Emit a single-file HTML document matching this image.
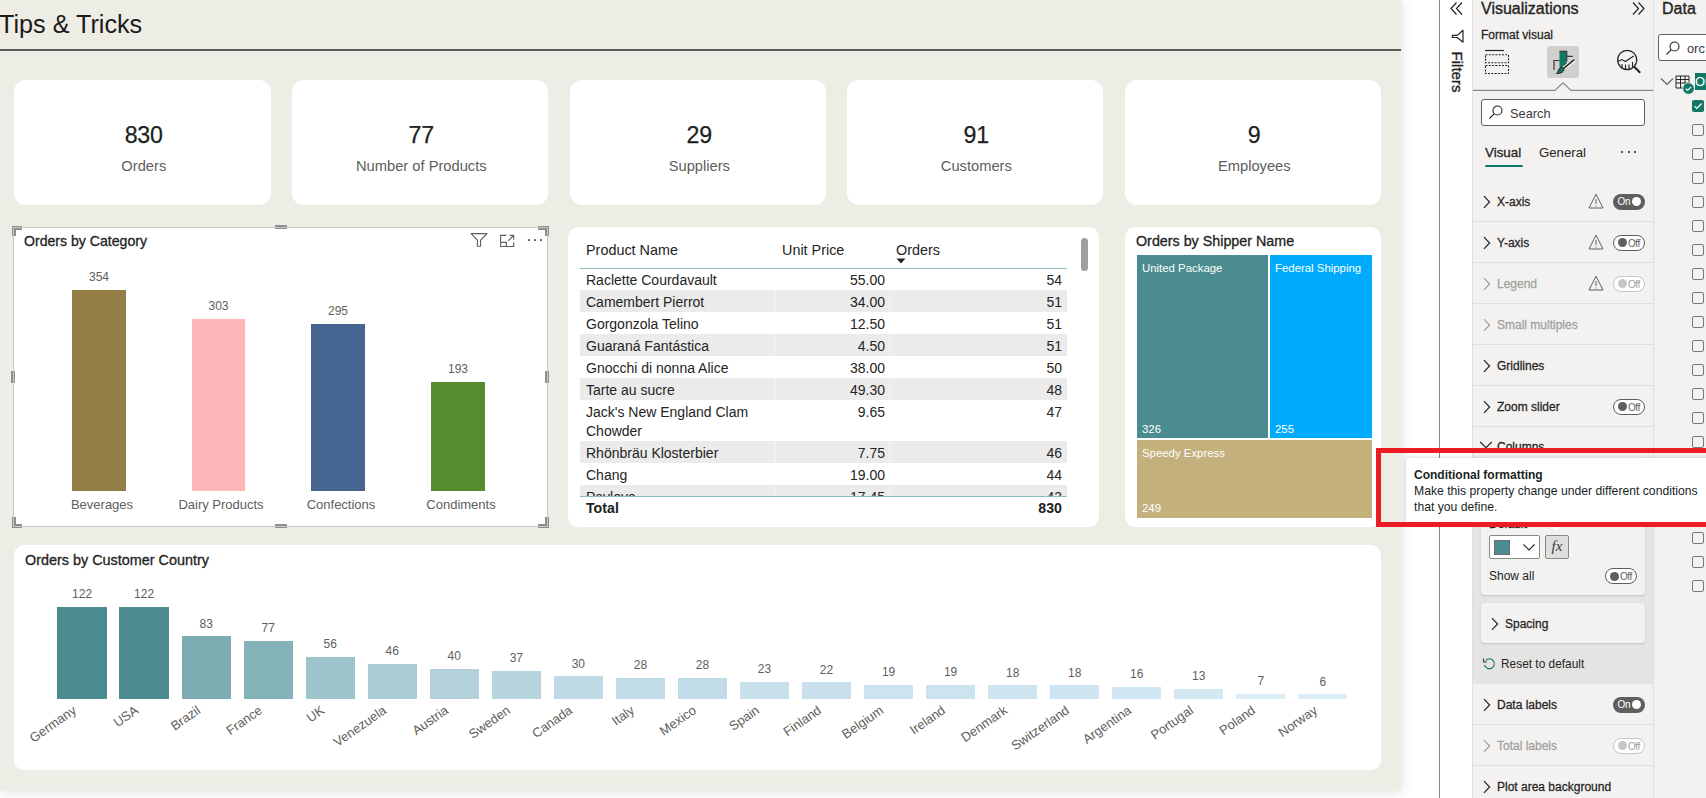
<!DOCTYPE html><html><head><meta charset="utf-8"><style>
html,body{margin:0;padding:0;width:1706px;height:798px;overflow:hidden;background:#F6F6F6}
#root{position:relative;width:1706px;height:798px;overflow:hidden;font-family:"Liberation Sans",sans-serif}
.t{position:absolute;white-space:nowrap}
</style></head><body><div id="root">
<div style="position:absolute;left:0px;top:0px;width:1706px;height:798px;background:#FFFFFF"></div>
<div style="position:absolute;left:0px;top:0px;width:1401px;height:791px;background:#EEEDE5;box-shadow:0 0 12px rgba(0,0,0,0.15)"></div>
<div class="t" style="left:-1px;top:9.25px;font-size:25.2px;line-height:31.5px;color:#1B1A19;font-weight:normal;">Tips &amp; Tricks</div>
<div style="position:absolute;left:0px;top:49px;width:1401px;height:2px;background:#5A5A56"></div>
<div style="position:absolute;left:14px;top:80px;width:257px;height:125px;background:#fff;border-radius:12px"></div>
<div class="t" style="left:-156.2px;width:600px;text-align:center;top:121.1px;font-size:23.2px;line-height:29.0px;color:#201F1E;font-weight:normal;letter-spacing:-0.3px;text-indent:-0.3px;-webkit-text-stroke:0.25px #201F1E">830</div>
<div class="t" style="left:-156.2px;width:600px;text-align:center;top:156.81px;font-size:14.7px;line-height:18.38px;color:#605E5C;font-weight:normal;">Orders</div>
<div style="position:absolute;left:292px;top:80px;width:256px;height:125px;background:#fff;border-radius:12px"></div>
<div class="t" style="left:121.30000000000001px;width:600px;text-align:center;top:121.1px;font-size:23.2px;line-height:29.0px;color:#201F1E;font-weight:normal;letter-spacing:-0.3px;text-indent:-0.3px;-webkit-text-stroke:0.25px #201F1E">77</div>
<div class="t" style="left:121.30000000000001px;width:600px;text-align:center;top:156.81px;font-size:14.7px;line-height:18.38px;color:#605E5C;font-weight:normal;">Number of Products</div>
<div style="position:absolute;left:570px;top:80px;width:256px;height:125px;background:#fff;border-radius:12px"></div>
<div class="t" style="left:399.29999999999995px;width:600px;text-align:center;top:121.1px;font-size:23.2px;line-height:29.0px;color:#201F1E;font-weight:normal;letter-spacing:-0.3px;text-indent:-0.3px;-webkit-text-stroke:0.25px #201F1E">29</div>
<div class="t" style="left:399.29999999999995px;width:600px;text-align:center;top:156.81px;font-size:14.7px;line-height:18.38px;color:#605E5C;font-weight:normal;">Suppliers</div>
<div style="position:absolute;left:847px;top:80px;width:256px;height:125px;background:#fff;border-radius:12px"></div>
<div class="t" style="left:676.3px;width:600px;text-align:center;top:121.1px;font-size:23.2px;line-height:29.0px;color:#201F1E;font-weight:normal;letter-spacing:-0.3px;text-indent:-0.3px;-webkit-text-stroke:0.25px #201F1E">91</div>
<div class="t" style="left:676.3px;width:600px;text-align:center;top:156.81px;font-size:14.7px;line-height:18.38px;color:#605E5C;font-weight:normal;">Customers</div>
<div style="position:absolute;left:1125px;top:80px;width:256px;height:125px;background:#fff;border-radius:12px"></div>
<div class="t" style="left:954.3px;width:600px;text-align:center;top:121.1px;font-size:23.2px;line-height:29.0px;color:#201F1E;font-weight:normal;letter-spacing:-0.3px;text-indent:-0.3px;-webkit-text-stroke:0.25px #201F1E">9</div>
<div class="t" style="left:954.3px;width:600px;text-align:center;top:156.81px;font-size:14.7px;line-height:18.38px;color:#605E5C;font-weight:normal;">Employees</div>
<div style="position:absolute;left:13px;top:227px;width:535px;height:300px;background:#fff"></div>
<div class="t" style="left:24px;top:232.69px;font-size:14.1px;line-height:17.62px;color:#252423;font-weight:normal;-webkit-text-stroke:0.31px #252423;">Orders by Category</div>
<div style="position:absolute;left:72px;top:290px;width:54px;height:201px;background:#937F45"></div>
<div class="t" style="left:-201.0px;width:600px;text-align:center;top:270.3px;font-size:12px;line-height:15.0px;color:#605E5C;font-weight:normal;">354</div>
<div class="t" style="left:-198px;width:600px;text-align:center;top:497.27px;font-size:13px;line-height:16.25px;color:#605E5C;font-weight:normal;">Beverages</div>
<div style="position:absolute;left:192px;top:319px;width:53px;height:172px;background:#FFB6B9"></div>
<div class="t" style="left:-81.5px;width:600px;text-align:center;top:299.3px;font-size:12px;line-height:15.0px;color:#605E5C;font-weight:normal;">303</div>
<div class="t" style="left:-79px;width:600px;text-align:center;top:497.27px;font-size:13px;line-height:16.25px;color:#605E5C;font-weight:normal;">Dairy Products</div>
<div style="position:absolute;left:311px;top:324px;width:54px;height:167px;background:#476591"></div>
<div class="t" style="left:38.0px;width:600px;text-align:center;top:304.3px;font-size:12px;line-height:15.0px;color:#605E5C;font-weight:normal;">295</div>
<div class="t" style="left:41px;width:600px;text-align:center;top:497.27px;font-size:13px;line-height:16.25px;color:#605E5C;font-weight:normal;">Confections</div>
<div style="position:absolute;left:431px;top:382px;width:54px;height:109px;background:#568C2F"></div>
<div class="t" style="left:158.0px;width:600px;text-align:center;top:362.3px;font-size:12px;line-height:15.0px;color:#605E5C;font-weight:normal;">193</div>
<div class="t" style="left:161px;width:600px;text-align:center;top:497.27px;font-size:13px;line-height:16.25px;color:#605E5C;font-weight:normal;">Condiments</div>
<div style="position:absolute;left:12px;top:226px;width:10px;height:4px;background:#8F8E8C"></div>
<div style="position:absolute;left:12px;top:226px;width:4px;height:10px;background:#8F8E8C"></div>
<div style="position:absolute;left:538px;top:226px;width:11px;height:4px;background:#8F8E8C"></div>
<div style="position:absolute;left:545px;top:226px;width:4px;height:10px;background:#8F8E8C"></div>
<div style="position:absolute;left:12px;top:524px;width:10px;height:4px;background:#8F8E8C"></div>
<div style="position:absolute;left:12px;top:517px;width:4px;height:11px;background:#8F8E8C"></div>
<div style="position:absolute;left:538px;top:524px;width:11px;height:4px;background:#8F8E8C"></div>
<div style="position:absolute;left:545px;top:517px;width:4px;height:11px;background:#8F8E8C"></div>
<div style="position:absolute;left:275px;top:225px;width:12px;height:4px;background:#8F8E8C"></div>
<div style="position:absolute;left:275px;top:524px;width:12px;height:4px;background:#8F8E8C"></div>
<div style="position:absolute;left:11px;top:371px;width:4px;height:12px;background:#8F8E8C"></div>
<div style="position:absolute;left:545px;top:371px;width:4px;height:12px;background:#8F8E8C"></div>
<div style="position:absolute;left:13px;top:227px;width:535px;height:300px;box-sizing:border-box;border:1px solid #C8C6C4"></div>
<svg style="position:absolute;left:469px;top:232px" width="20" height="17" viewBox="0 0 20 17"><path d="M2.1 1.6H17.9L11.6 8.2V14.3H8.4V8.2Z" fill="none" stroke="#605E5C" stroke-width="1.1" stroke-linejoin="round"/></svg>
<svg style="position:absolute;left:498px;top:232px" width="18" height="17" viewBox="0 0 18 17"><path d="M8.4 3.4H2.6V14.5H15.7V10.4M2.6 10.4H8.4V14.5M11.6 3.4H15.7V7.8M10.3 8.8L15.7 3.4" fill="none" stroke="#605E5C" stroke-width="1.1"/></svg>
<div style="position:absolute;left:528px;top:239px;width:2px;height:2px;background:#605E5C;border-radius:0.5px"></div>
<div style="position:absolute;left:534px;top:239px;width:2px;height:2px;background:#605E5C;border-radius:0.5px"></div>
<div style="position:absolute;left:540px;top:239px;width:2px;height:2px;background:#605E5C;border-radius:0.5px"></div>
<div style="position:absolute;left:568px;top:227px;width:531px;height:300px;background:#fff;border-radius:10px"></div>
<div class="t" style="left:586px;top:241.0px;font-size:14.4px;line-height:18.0px;color:#252423;font-weight:normal;">Product Name</div>
<div class="t" style="left:782px;top:241.0px;font-size:14.4px;line-height:18.0px;color:#252423;font-weight:normal;">Unit Price</div>
<div class="t" style="left:896px;top:241.0px;font-size:14.4px;line-height:18.0px;color:#252423;font-weight:normal;">Orders</div>
<svg style="position:absolute;left:896px;top:258px" width="10" height="6" viewBox="0 0 10 6"><path d="M0.5 0.5h9l-4.5 5z" fill="#252423"/></svg>
<div style="position:absolute;left:580px;top:267.5px;width:487px;height:1.5px;background:#8CBDC0"></div>
<div style="position:absolute;left:568px;top:269px;width:531px;height:227.5px;overflow:hidden">
<div style="position:absolute;left:12px;top:-1px;width:487px;height:22px;background:#fff"></div>
<div class="t" style="left:18px;top:2px;font-size:14px;line-height:19px;color:#252423">Raclette Courdavault</div>
<div class="t" style="left:217px;width:100px;text-align:right;top:2px;font-size:14px;line-height:19px;color:#252423">55.00</div>
<div class="t" style="left:394px;width:100px;text-align:right;top:2px;font-size:14px;line-height:19px;color:#252423">54</div>
<div style="position:absolute;left:12px;top:21px;width:487px;height:22px;background:#EBEBEB"></div>
<div style="position:absolute;left:207px;top:21px;width:1px;height:22px;background:#F2F2F2"></div>
<div style="position:absolute;left:321px;top:21px;width:1px;height:22px;background:#F2F2F2"></div>
<div class="t" style="left:18px;top:24px;font-size:14px;line-height:19px;color:#252423">Camembert Pierrot</div>
<div class="t" style="left:217px;width:100px;text-align:right;top:24px;font-size:14px;line-height:19px;color:#252423">34.00</div>
<div class="t" style="left:394px;width:100px;text-align:right;top:24px;font-size:14px;line-height:19px;color:#252423">51</div>
<div style="position:absolute;left:12px;top:43px;width:487px;height:22px;background:#fff"></div>
<div class="t" style="left:18px;top:46px;font-size:14px;line-height:19px;color:#252423">Gorgonzola Telino</div>
<div class="t" style="left:217px;width:100px;text-align:right;top:46px;font-size:14px;line-height:19px;color:#252423">12.50</div>
<div class="t" style="left:394px;width:100px;text-align:right;top:46px;font-size:14px;line-height:19px;color:#252423">51</div>
<div style="position:absolute;left:12px;top:65px;width:487px;height:22px;background:#EBEBEB"></div>
<div style="position:absolute;left:207px;top:65px;width:1px;height:22px;background:#F2F2F2"></div>
<div style="position:absolute;left:321px;top:65px;width:1px;height:22px;background:#F2F2F2"></div>
<div class="t" style="left:18px;top:68px;font-size:14px;line-height:19px;color:#252423">Guaran&aacute; Fant&aacute;stica</div>
<div class="t" style="left:217px;width:100px;text-align:right;top:68px;font-size:14px;line-height:19px;color:#252423">4.50</div>
<div class="t" style="left:394px;width:100px;text-align:right;top:68px;font-size:14px;line-height:19px;color:#252423">51</div>
<div style="position:absolute;left:12px;top:87px;width:487px;height:22px;background:#fff"></div>
<div class="t" style="left:18px;top:90px;font-size:14px;line-height:19px;color:#252423">Gnocchi di nonna Alice</div>
<div class="t" style="left:217px;width:100px;text-align:right;top:90px;font-size:14px;line-height:19px;color:#252423">38.00</div>
<div class="t" style="left:394px;width:100px;text-align:right;top:90px;font-size:14px;line-height:19px;color:#252423">50</div>
<div style="position:absolute;left:12px;top:109px;width:487px;height:22px;background:#EBEBEB"></div>
<div style="position:absolute;left:207px;top:109px;width:1px;height:22px;background:#F2F2F2"></div>
<div style="position:absolute;left:321px;top:109px;width:1px;height:22px;background:#F2F2F2"></div>
<div class="t" style="left:18px;top:112px;font-size:14px;line-height:19px;color:#252423">Tarte au sucre</div>
<div class="t" style="left:217px;width:100px;text-align:right;top:112px;font-size:14px;line-height:19px;color:#252423">49.30</div>
<div class="t" style="left:394px;width:100px;text-align:right;top:112px;font-size:14px;line-height:19px;color:#252423">48</div>
<div style="position:absolute;left:12px;top:131px;width:487px;height:40.5px;background:#fff"></div>
<div class="t" style="left:18px;top:134px;font-size:14px;line-height:19px;color:#252423">Jack's New England Clam<br>Chowder</div>
<div class="t" style="left:217px;width:100px;text-align:right;top:134px;font-size:14px;line-height:19px;color:#252423">9.65</div>
<div class="t" style="left:394px;width:100px;text-align:right;top:134px;font-size:14px;line-height:19px;color:#252423">47</div>
<div style="position:absolute;left:12px;top:171.5px;width:487px;height:22.5px;background:#EBEBEB"></div>
<div style="position:absolute;left:207px;top:171.5px;width:1px;height:22.5px;background:#F2F2F2"></div>
<div style="position:absolute;left:321px;top:171.5px;width:1px;height:22.5px;background:#F2F2F2"></div>
<div class="t" style="left:18px;top:174.5px;font-size:14px;line-height:19px;color:#252423">Rh&ouml;nbr&auml;u Klosterbier</div>
<div class="t" style="left:217px;width:100px;text-align:right;top:174.5px;font-size:14px;line-height:19px;color:#252423">7.75</div>
<div class="t" style="left:394px;width:100px;text-align:right;top:174.5px;font-size:14px;line-height:19px;color:#252423">46</div>
<div style="position:absolute;left:12px;top:194px;width:487px;height:22px;background:#fff"></div>
<div class="t" style="left:18px;top:197px;font-size:14px;line-height:19px;color:#252423">Chang</div>
<div class="t" style="left:217px;width:100px;text-align:right;top:197px;font-size:14px;line-height:19px;color:#252423">19.00</div>
<div class="t" style="left:394px;width:100px;text-align:right;top:197px;font-size:14px;line-height:19px;color:#252423">44</div>
<div style="position:absolute;left:12px;top:216px;width:487px;height:22px;background:#EBEBEB"></div>
<div style="position:absolute;left:207px;top:216px;width:1px;height:22px;background:#F2F2F2"></div>
<div style="position:absolute;left:321px;top:216px;width:1px;height:22px;background:#F2F2F2"></div>
<div class="t" style="left:18px;top:219px;font-size:14px;line-height:19px;color:#252423">Pavlova</div>
<div class="t" style="left:217px;width:100px;text-align:right;top:219px;font-size:14px;line-height:19px;color:#252423">17.45</div>
<div class="t" style="left:394px;width:100px;text-align:right;top:219px;font-size:14px;line-height:19px;color:#252423">43</div>
</div>
<div style="position:absolute;left:580px;top:496px;width:487px;height:1.2px;background:#8CBDC0"></div>
<div class="t" style="left:586px;top:499.62px;font-size:14.2px;line-height:17.75px;color:#201F1E;font-weight:bold;">Total</div>
<div class="t" style="left:462px;width:600px;text-align:right;top:499.62px;font-size:14.2px;line-height:17.75px;color:#201F1E;font-weight:bold;">830</div>
<div style="position:absolute;left:1081px;top:238px;width:7px;height:33px;background:#A19F9D;border-radius:4px"></div>
<div style="position:absolute;left:1125px;top:227px;width:256px;height:300px;background:#fff;border-radius:10px"></div>
<div class="t" style="left:1136px;top:232.56px;font-size:14.3px;line-height:17.88px;color:#252423;font-weight:normal;-webkit-text-stroke:0.31px #252423;">Orders by Shipper Name</div>
<div style="position:absolute;left:1137px;top:255px;width:131px;height:183px;background:#4A8C8F"></div>
<div style="position:absolute;left:1269.7px;top:255px;width:102.3px;height:183px;background:#01ABFB"></div>
<div style="position:absolute;left:1137px;top:440px;width:235px;height:78px;background:#C4B07C"></div>
<div class="t" style="left:1142px;top:260.88px;font-size:11.4px;line-height:14.25px;color:#FFFFFF;font-weight:normal;">United Package</div>
<div class="t" style="left:1142px;top:422.38px;font-size:11.4px;line-height:14.25px;color:#FFFFFF;font-weight:normal;">326</div>
<div class="t" style="left:1275px;top:260.88px;font-size:11.4px;line-height:14.25px;color:#FFFFFF;font-weight:normal;">Federal Shipping</div>
<div class="t" style="left:1275px;top:422.38px;font-size:11.4px;line-height:14.25px;color:#FFFFFF;font-weight:normal;">255</div>
<div class="t" style="left:1142px;top:445.88px;font-size:11.4px;line-height:14.25px;color:#FFFFFF;font-weight:normal;">Speedy Express</div>
<div class="t" style="left:1142px;top:501.38px;font-size:11.4px;line-height:14.25px;color:#FFFFFF;font-weight:normal;">249</div>
<div style="position:absolute;left:14px;top:545px;width:1367px;height:225px;background:#fff;border-radius:10px"></div>
<div class="t" style="left:25px;top:550.5px;font-size:14.4px;line-height:18.0px;color:#252423;font-weight:normal;-webkit-text-stroke:0.32px #252423;">Orders by Customer Country</div>
<div style="position:absolute;left:57.4px;top:606.9px;width:49.3px;height:91.9px;background:#4A8C8F"></div>
<div class="t" style="left:-217.95px;width:600px;text-align:center;top:587.2px;font-size:12px;line-height:15.0px;color:#605E5C;font-weight:normal;">122</div>
<div class="t" style="left:-224.9px;width:300px;text-align:right;top:700.0px;font-size:13px;line-height:18px;color:#605E5C;transform-origin:100% 50%;transform:rotate(-35deg)">Germany</div>
<div style="position:absolute;left:119.4px;top:606.9px;width:49.3px;height:91.9px;background:#4A8C8F"></div>
<div class="t" style="left:-155.91px;width:600px;text-align:center;top:587.2px;font-size:12px;line-height:15.0px;color:#605E5C;font-weight:normal;">122</div>
<div class="t" style="left:-162.9px;width:300px;text-align:right;top:700.0px;font-size:13px;line-height:18px;color:#605E5C;transform-origin:100% 50%;transform:rotate(-35deg)">USA</div>
<div style="position:absolute;left:181.5px;top:636.3px;width:49.3px;height:62.5px;background:#7BADB3"></div>
<div class="t" style="left:-93.87px;width:600px;text-align:center;top:616.58px;font-size:12px;line-height:15.0px;color:#605E5C;font-weight:normal;">83</div>
<div class="t" style="left:-100.9px;width:300px;text-align:right;top:700.0px;font-size:13px;line-height:18px;color:#605E5C;transform-origin:100% 50%;transform:rotate(-35deg)">Brazil</div>
<div style="position:absolute;left:243.5px;top:640.8px;width:49.3px;height:58.0px;background:#83B2B9"></div>
<div class="t" style="left:-31.829999999999984px;width:600px;text-align:center;top:621.1px;font-size:12px;line-height:15.0px;color:#605E5C;font-weight:normal;">77</div>
<div class="t" style="left:-38.8px;width:300px;text-align:right;top:700.0px;font-size:13px;line-height:18px;color:#605E5C;transform-origin:100% 50%;transform:rotate(-35deg)">France</div>
<div style="position:absolute;left:305.6px;top:656.6px;width:49.3px;height:42.2px;background:#9EC4CC"></div>
<div class="t" style="left:30.20999999999998px;width:600px;text-align:center;top:636.92px;font-size:12px;line-height:15.0px;color:#605E5C;font-weight:normal;">56</div>
<div class="t" style="left:23.2px;width:300px;text-align:right;top:700.0px;font-size:13px;line-height:18px;color:#605E5C;transform-origin:100% 50%;transform:rotate(-35deg)">UK</div>
<div style="position:absolute;left:367.6px;top:664.1px;width:49.3px;height:34.7px;background:#AACCD6"></div>
<div class="t" style="left:92.24999999999994px;width:600px;text-align:center;top:644.45px;font-size:12px;line-height:15.0px;color:#605E5C;font-weight:normal;">46</div>
<div class="t" style="left:85.2px;width:300px;text-align:right;top:700.0px;font-size:13px;line-height:18px;color:#605E5C;transform-origin:100% 50%;transform:rotate(-35deg)">Venezuela</div>
<div style="position:absolute;left:429.6px;top:668.7px;width:49.3px;height:30.1px;background:#B2D1DB"></div>
<div class="t" style="left:154.28999999999996px;width:600px;text-align:center;top:648.97px;font-size:12px;line-height:15.0px;color:#605E5C;font-weight:normal;">40</div>
<div class="t" style="left:147.3px;width:300px;text-align:right;top:700.0px;font-size:13px;line-height:18px;color:#605E5C;transform-origin:100% 50%;transform:rotate(-35deg)">Austria</div>
<div style="position:absolute;left:491.7px;top:670.9px;width:49.3px;height:27.9px;background:#B6D4DE"></div>
<div class="t" style="left:216.32999999999993px;width:600px;text-align:center;top:651.23px;font-size:12px;line-height:15.0px;color:#605E5C;font-weight:normal;">37</div>
<div class="t" style="left:209.3px;width:300px;text-align:right;top:700.0px;font-size:13px;line-height:18px;color:#605E5C;transform-origin:100% 50%;transform:rotate(-35deg)">Sweden</div>
<div style="position:absolute;left:553.7px;top:676.2px;width:49.3px;height:22.6px;background:#BFDAE5"></div>
<div class="t" style="left:278.37px;width:600px;text-align:center;top:656.5px;font-size:12px;line-height:15.0px;color:#605E5C;font-weight:normal;">30</div>
<div class="t" style="left:271.4px;width:300px;text-align:right;top:700.0px;font-size:13px;line-height:18px;color:#605E5C;transform-origin:100% 50%;transform:rotate(-35deg)">Canada</div>
<div style="position:absolute;left:615.8px;top:677.7px;width:49.3px;height:21.1px;background:#C1DBE7"></div>
<div class="t" style="left:340.40999999999997px;width:600px;text-align:center;top:658.01px;font-size:12px;line-height:15.0px;color:#605E5C;font-weight:normal;">28</div>
<div class="t" style="left:333.4px;width:300px;text-align:right;top:700.0px;font-size:13px;line-height:18px;color:#605E5C;transform-origin:100% 50%;transform:rotate(-35deg)">Italy</div>
<div style="position:absolute;left:677.8px;top:677.7px;width:49.3px;height:21.1px;background:#C1DBE7"></div>
<div class="t" style="left:402.44999999999993px;width:600px;text-align:center;top:658.01px;font-size:12px;line-height:15.0px;color:#605E5C;font-weight:normal;">28</div>
<div class="t" style="left:395.4px;width:300px;text-align:right;top:700.0px;font-size:13px;line-height:18px;color:#605E5C;transform-origin:100% 50%;transform:rotate(-35deg)">Mexico</div>
<div style="position:absolute;left:739.8px;top:681.5px;width:49.3px;height:17.3px;background:#C7E0EB"></div>
<div class="t" style="left:464.4899999999999px;width:600px;text-align:center;top:661.77px;font-size:12px;line-height:15.0px;color:#605E5C;font-weight:normal;">23</div>
<div class="t" style="left:457.5px;width:300px;text-align:right;top:700.0px;font-size:13px;line-height:18px;color:#605E5C;transform-origin:100% 50%;transform:rotate(-35deg)">Spain</div>
<div style="position:absolute;left:801.9px;top:682.2px;width:49.3px;height:16.6px;background:#C9E0EC"></div>
<div class="t" style="left:526.53px;width:600px;text-align:center;top:662.53px;font-size:12px;line-height:15.0px;color:#605E5C;font-weight:normal;">22</div>
<div class="t" style="left:519.5px;width:300px;text-align:right;top:700.0px;font-size:13px;line-height:18px;color:#605E5C;transform-origin:100% 50%;transform:rotate(-35deg)">Finland</div>
<div style="position:absolute;left:863.9px;top:684.5px;width:49.3px;height:14.3px;background:#CDE3EF"></div>
<div class="t" style="left:588.5699999999999px;width:600px;text-align:center;top:664.79px;font-size:12px;line-height:15.0px;color:#605E5C;font-weight:normal;">19</div>
<div class="t" style="left:581.6px;width:300px;text-align:right;top:700.0px;font-size:13px;line-height:18px;color:#605E5C;transform-origin:100% 50%;transform:rotate(-35deg)">Belgium</div>
<div style="position:absolute;left:926.0px;top:684.5px;width:49.3px;height:14.3px;background:#CDE3EF"></div>
<div class="t" style="left:650.6099999999999px;width:600px;text-align:center;top:664.79px;font-size:12px;line-height:15.0px;color:#605E5C;font-weight:normal;">19</div>
<div class="t" style="left:643.6px;width:300px;text-align:right;top:700.0px;font-size:13px;line-height:18px;color:#605E5C;transform-origin:100% 50%;transform:rotate(-35deg)">Ireland</div>
<div style="position:absolute;left:988.0px;top:685.2px;width:49.3px;height:13.6px;background:#CEE4F0"></div>
<div class="t" style="left:712.65px;width:600px;text-align:center;top:665.54px;font-size:12px;line-height:15.0px;color:#605E5C;font-weight:normal;">18</div>
<div class="t" style="left:705.6px;width:300px;text-align:right;top:700.0px;font-size:13px;line-height:18px;color:#605E5C;transform-origin:100% 50%;transform:rotate(-35deg)">Denmark</div>
<div style="position:absolute;left:1050.0px;top:685.2px;width:49.3px;height:13.6px;background:#CEE4F0"></div>
<div class="t" style="left:774.69px;width:600px;text-align:center;top:665.54px;font-size:12px;line-height:15.0px;color:#605E5C;font-weight:normal;">18</div>
<div class="t" style="left:767.7px;width:300px;text-align:right;top:700.0px;font-size:13px;line-height:18px;color:#605E5C;transform-origin:100% 50%;transform:rotate(-35deg)">Switzerland</div>
<div style="position:absolute;left:1112.1px;top:686.7px;width:49.3px;height:12.1px;background:#D0E6F2"></div>
<div class="t" style="left:836.7300000000002px;width:600px;text-align:center;top:667.05px;font-size:12px;line-height:15.0px;color:#605E5C;font-weight:normal;">16</div>
<div class="t" style="left:829.7px;width:300px;text-align:right;top:700.0px;font-size:13px;line-height:18px;color:#605E5C;transform-origin:100% 50%;transform:rotate(-35deg)">Argentina</div>
<div style="position:absolute;left:1174.1px;top:689.0px;width:49.3px;height:9.8px;background:#D4E8F4"></div>
<div class="t" style="left:898.7700000000002px;width:600px;text-align:center;top:669.31px;font-size:12px;line-height:15.0px;color:#605E5C;font-weight:normal;">13</div>
<div class="t" style="left:891.8px;width:300px;text-align:right;top:700.0px;font-size:13px;line-height:18px;color:#605E5C;transform-origin:100% 50%;transform:rotate(-35deg)">Portugal</div>
<div style="position:absolute;left:1236.2px;top:693.5px;width:49.3px;height:5.3px;background:#DCEDFA"></div>
<div class="t" style="left:960.8100000000002px;width:600px;text-align:center;top:673.83px;font-size:12px;line-height:15.0px;color:#605E5C;font-weight:normal;">7</div>
<div class="t" style="left:953.8px;width:300px;text-align:right;top:700.0px;font-size:13px;line-height:18px;color:#605E5C;transform-origin:100% 50%;transform:rotate(-35deg)">Poland</div>
<div style="position:absolute;left:1298.2px;top:694.3px;width:49.3px;height:4.5px;background:#DDEEFB"></div>
<div class="t" style="left:1022.8500000000001px;width:600px;text-align:center;top:674.58px;font-size:12px;line-height:15.0px;color:#605E5C;font-weight:normal;">6</div>
<div class="t" style="left:1015.9px;width:300px;text-align:right;top:700.0px;font-size:13px;line-height:18px;color:#605E5C;transform-origin:100% 50%;transform:rotate(-35deg)">Norway</div>
<div style="position:absolute;left:1439px;top:0px;width:1px;height:798px;background:#8A8886"></div>
<svg style="position:absolute;left:1449px;top:1px" width="15" height="15" viewBox="0 0 15 15"><path d="M7.5 1.5L2 7.5l5.5 6M13 1.5L7.5 7.5l5.5 6" fill="none" stroke="#252423" stroke-width="1.2"/></svg>
<svg style="position:absolute;left:1451px;top:29px" width="14" height="15" viewBox="0 0 14 15"><path d="M12 1.3L6.3 6.4H1.4V8.5H6.3L12 13.2Z" fill="none" stroke="#252423" stroke-width="1.2" stroke-linejoin="round"/></svg>
<div class="t" style="left:1436px;top:64px;width:42px;height:16px;font-size:15px;line-height:16px;-webkit-text-stroke:0.35px #252423;color:#252423;transform:rotate(90deg);transform-origin:50% 50%;text-align:center">Filters</div>
<div style="position:absolute;left:1472px;top:0px;width:1px;height:798px;background:#E1DFDD"></div>
<div style="position:absolute;left:1473px;top:0px;width:180px;height:798px;background:#F3F2F1"></div>
<div style="position:absolute;left:1653px;top:0px;width:1px;height:798px;background:#E1DFDD"></div>
<div style="position:absolute;left:1654px;top:0px;width:52px;height:798px;background:#F3F2F1"></div>
<div class="t" style="left:1481px;top:-1.5px;font-size:16px;line-height:20.0px;color:#252423;font-weight:normal;-webkit-text-stroke:0.35px #252423;">Visualizations</div>
<svg style="position:absolute;left:1631px;top:1px" width="15" height="15" viewBox="0 0 15 15"><path d="M2 1.5l5.5 6L2 13.5M7.5 1.5l5.5 6l-5.5 6" fill="none" stroke="#252423" stroke-width="1.2"/></svg>
<div class="t" style="left:1481px;top:27.5px;font-size:12px;line-height:15.0px;color:#252423;font-weight:normal;-webkit-text-stroke:0.26px #252423;">Format visual</div>
<svg style="position:absolute;left:1484px;top:49px" width="26" height="26" viewBox="0 0 26 26"><path d="M1 1.5h19" stroke="#252423" stroke-width="1.2"/><rect x="1.5" y="5.8" width="23" height="8" fill="none" stroke="#252423" stroke-width="1.1" stroke-dasharray="2 1.3"/><rect x="1.5" y="16.5" width="23" height="8" fill="none" stroke="#252423" stroke-width="1.1" stroke-dasharray="2 1.3"/></svg>
<div style="position:absolute;left:1547px;top:46px;width:32px;height:32px;background:#D2D0CE;border-radius:3px"></div>
<svg style="position:absolute;left:1547px;top:46px" width="32" height="32" viewBox="0 0 32 32"><rect x="12.5" y="5.3" width="7.2" height="16" fill="#117865"/><path d="M12.5 5.3h7.2v10M7 24V14.5h5.5M19.7 10.3h6" fill="none" stroke="#3B3A39" stroke-width="1.2"/><path d="M27.5 14L14.5 24" stroke="#F3F2F1" stroke-width="3.5"/><path d="M27.2 13.6L16 23" stroke="#252423" stroke-width="1.6"/><path d="M9.5 27.5c3 0 5.5-.5 7-2.5c1-1.5.5-3-1-3.5c-2-.5-3.5 1-4 2.5c-.4 1.5-1 2.8-2 3.5z" fill="#117865" stroke="#252423" stroke-width="1"/></svg>
<svg style="position:absolute;left:1615px;top:48px" width="28" height="28" viewBox="0 0 28 28"><circle cx="12.2" cy="11.9" r="9.6" fill="none" stroke="#252423" stroke-width="1.3"/><path d="M19 18.5l6.2 6.2" stroke="#252423" stroke-width="2"/><path d="M2.8 13.5l4-2l3.5 2l8.5-5.5" fill="none" stroke="#252423" stroke-width="1.1"/><path d="M7 16v5M10.5 16.5v5.5M14 16.5v5.5M17.5 14v5" stroke="#252423" stroke-width="1.1"/></svg>
<svg style="position:absolute;left:1473px;top:80px" width="180" height="12" viewBox="0 0 180 12"><path d="M0 10.4h82l8-7.5l8 7.5h82" fill="#F3F2F1" stroke="#8A8886" stroke-width="1.2"/></svg>
<div style="position:absolute;left:1481px;top:99px;width:164px;height:27px;box-sizing:border-box;background:#fff;border:1px solid #605E5C;border-radius:3px"></div>
<svg style="position:absolute;left:1488px;top:104px" width="16" height="16" viewBox="0 0 16 16"><circle cx="9.5" cy="6.5" r="4.5" fill="none" stroke="#252423" stroke-width="1.1"/><path d="M6.3 9.7L1.5 14.5" stroke="#252423" stroke-width="1.1"/></svg>
<div class="t" style="left:1510px;top:105.5px;font-size:12.8px;line-height:16.0px;color:#3B3A39;font-weight:normal;">Search</div>
<div class="t" style="left:1485px;top:144.82px;font-size:13.4px;line-height:16.75px;color:#252423;font-weight:normal;-webkit-text-stroke:0.29px #252423;">Visual</div>
<div style="position:absolute;left:1485px;top:164.5px;width:38px;height:2.2px;background:#117865;border-radius:1px"></div>
<div class="t" style="left:1539px;top:144.95px;font-size:13.2px;line-height:16.5px;color:#252423;font-weight:normal;">General</div>
<div style="position:absolute;left:1621.0px;top:151px;width:2.2px;height:2.2px;background:#252423;border-radius:1px"></div>
<div style="position:absolute;left:1627.5px;top:151px;width:2.2px;height:2.2px;background:#252423;border-radius:1px"></div>
<div style="position:absolute;left:1634.0px;top:151px;width:2.2px;height:2.2px;background:#252423;border-radius:1px"></div>
<svg style="position:absolute;left:1482px;top:194.5px" width="10" height="14" viewBox="0 0 10 14"><path d="M2 1.2l5.6 5.8L2 12.8" fill="none" stroke="#252423" stroke-width="1.2"/></svg>
<div class="t" style="left:1497px;top:194.8px;font-size:12px;line-height:15.0px;color:#252423;font-weight:normal;-webkit-text-stroke:0.26px #252423;">X-axis</div>
<svg style="position:absolute;left:1588px;top:193.0px" width="16" height="16" viewBox="0 0 16 16"><path d="M8 1.2L1 15h14z" fill="none" stroke="#605E5C" stroke-width="1"/><path d="M8 6v5M8 12.5v1" stroke="#605E5C" stroke-width="1"/></svg>
<div style="position:absolute;left:1613px;top:193.5px;width:32px;height:16px;border-radius:8px;background:#605E5C"></div>
<div class="t" style="left:1617.5px;top:195.0px;font-size:10px;line-height:14px;color:#fff;letter-spacing:-0.4px">On</div>
<div style="position:absolute;left:1631.5px;top:197.0px;width:9px;height:9px;border-radius:5px;background:#fff"></div>
<div style="position:absolute;left:1473px;top:221px;width:180px;height:1px;background:#E1DFDD"></div>
<svg style="position:absolute;left:1482px;top:235.7px" width="10" height="14" viewBox="0 0 10 14"><path d="M2 1.2l5.6 5.8L2 12.8" fill="none" stroke="#252423" stroke-width="1.2"/></svg>
<div class="t" style="left:1497px;top:236.0px;font-size:12px;line-height:15.0px;color:#252423;font-weight:normal;-webkit-text-stroke:0.26px #252423;">Y-axis</div>
<svg style="position:absolute;left:1588px;top:234.2px" width="16" height="16" viewBox="0 0 16 16"><path d="M8 1.2L1 15h14z" fill="none" stroke="#605E5C" stroke-width="1"/><path d="M8 6v5M8 12.5v1" stroke="#605E5C" stroke-width="1"/></svg>
<div style="position:absolute;left:1613px;top:234.7px;width:32px;height:16px;box-sizing:border-box;border-radius:8px;background:#fff;border:1px solid #605E5C"></div>
<div style="position:absolute;left:1617.5px;top:238.2px;width:9px;height:9px;border-radius:5px;background:#605E5C"></div>
<div class="t" style="left:1628px;top:236.89999999999998px;font-size:10px;line-height:14px;color:#605E5C;letter-spacing:-0.5px">Off</div>
<div style="position:absolute;left:1473px;top:262px;width:180px;height:1px;background:#E1DFDD"></div>
<svg style="position:absolute;left:1482px;top:276.8px" width="10" height="14" viewBox="0 0 10 14"><path d="M2 1.2l5.6 5.8L2 12.8" fill="none" stroke="#A19F9D" stroke-width="1.2"/></svg>
<div class="t" style="left:1497px;top:277.1px;font-size:12px;line-height:15.0px;color:#A19F9D;font-weight:normal;-webkit-text-stroke:0.26px #A19F9D;">Legend</div>
<svg style="position:absolute;left:1588px;top:275.3px" width="16" height="16" viewBox="0 0 16 16"><path d="M8 1.2L1 15h14z" fill="none" stroke="#605E5C" stroke-width="1"/><path d="M8 6v5M8 12.5v1" stroke="#605E5C" stroke-width="1"/></svg>
<div style="position:absolute;left:1613px;top:275.8px;width:32px;height:16px;box-sizing:border-box;border-radius:8px;background:#fff;border:1px solid #C8C6C4"></div>
<div style="position:absolute;left:1617.5px;top:279.3px;width:9px;height:9px;border-radius:5px;background:#C8C6C4"></div>
<div class="t" style="left:1628px;top:278.0px;font-size:10px;line-height:14px;color:#A19F9D;letter-spacing:-0.5px">Off</div>
<div style="position:absolute;left:1473px;top:303px;width:180px;height:1px;background:#E1DFDD"></div>
<svg style="position:absolute;left:1482px;top:317.8px" width="10" height="14" viewBox="0 0 10 14"><path d="M2 1.2l5.6 5.8L2 12.8" fill="none" stroke="#A19F9D" stroke-width="1.2"/></svg>
<div class="t" style="left:1497px;top:318.1px;font-size:12px;line-height:15.0px;color:#A19F9D;font-weight:normal;-webkit-text-stroke:0.26px #A19F9D;">Small multiples</div>
<div style="position:absolute;left:1473px;top:344px;width:180px;height:1px;background:#E1DFDD"></div>
<svg style="position:absolute;left:1482px;top:358.7px" width="10" height="14" viewBox="0 0 10 14"><path d="M2 1.2l5.6 5.8L2 12.8" fill="none" stroke="#252423" stroke-width="1.2"/></svg>
<div class="t" style="left:1497px;top:359.0px;font-size:12px;line-height:15.0px;color:#252423;font-weight:normal;-webkit-text-stroke:0.26px #252423;">Gridlines</div>
<div style="position:absolute;left:1473px;top:385px;width:180px;height:1px;background:#E1DFDD"></div>
<svg style="position:absolute;left:1482px;top:399.5px" width="10" height="14" viewBox="0 0 10 14"><path d="M2 1.2l5.6 5.8L2 12.8" fill="none" stroke="#252423" stroke-width="1.2"/></svg>
<div class="t" style="left:1497px;top:399.8px;font-size:12px;line-height:15.0px;color:#252423;font-weight:normal;-webkit-text-stroke:0.26px #252423;">Zoom slider</div>
<div style="position:absolute;left:1613px;top:398.5px;width:32px;height:16px;box-sizing:border-box;border-radius:8px;background:#fff;border:1px solid #605E5C"></div>
<div style="position:absolute;left:1617.5px;top:402.0px;width:9px;height:9px;border-radius:5px;background:#605E5C"></div>
<div class="t" style="left:1628px;top:400.7px;font-size:10px;line-height:14px;color:#605E5C;letter-spacing:-0.5px">Off</div>
<div style="position:absolute;left:1473px;top:426px;width:180px;height:1px;background:#E1DFDD"></div>
<div style="position:absolute;left:1473px;top:467px;width:180px;height:217px;background:#E6E4E2"></div>
<svg style="position:absolute;left:1479px;top:440px" width="14" height="10" viewBox="0 0 14 10"><path d="M1.2 2l5.8 5.6L12.8 2" fill="none" stroke="#252423" stroke-width="1.2"/></svg>
<div class="t" style="left:1497px;top:439.5px;font-size:12px;line-height:15.0px;color:#252423;font-weight:normal;-webkit-text-stroke:0.26px #252423;">Columns</div>
<div style="position:absolute;left:1481px;top:457px;width:164px;height:138px;background:#F3F2F1;border-radius:4px;box-shadow:0 1px 2px rgba(0,0,0,0.15)"></div>
<div class="t" style="left:1489px;top:516.5px;font-size:12px;line-height:15.0px;color:#252423;font-weight:normal;-webkit-text-stroke:0.26px #252423;">Default</div>
<div style="position:absolute;left:1489px;top:535px;width:51px;height:24px;box-sizing:border-box;background:#fff;border:1px solid #8A8886;border-radius:2px"></div>
<div style="position:absolute;left:1494px;top:540px;width:16px;height:15px;box-sizing:border-box;background:#4A8C8F;border:1px solid #6E6D6B"></div>
<svg style="position:absolute;left:1522px;top:540px" width="14" height="14" viewBox="0 0 14 14"><path d="M1.5 4.5l5.5 5.5l5.5-5.5" fill="none" stroke="#252423" stroke-width="1.1"/></svg>
<div style="position:absolute;left:1545px;top:535px;width:24px;height:24px;box-sizing:border-box;background:#E1DFDD;border:1px solid #8A8886;border-radius:2px"></div>
<div class="t" style="left:1545px;width:24px;text-align:center;top:537px;font-family:'Liberation Serif',serif;font-style:italic;font-size:15px;line-height:18px;color:#3B3A39">fx</div>
<div class="t" style="left:1489px;top:569.3px;font-size:12px;line-height:15.0px;color:#252423;font-weight:normal;">Show all</div>
<div style="position:absolute;left:1605px;top:568px;width:32px;height:16px;box-sizing:border-box;border-radius:8px;background:#fff;border:1px solid #605E5C"></div>
<div style="position:absolute;left:1609.5px;top:571.5px;width:9px;height:9px;border-radius:5px;background:#605E5C"></div>
<div class="t" style="left:1620px;top:570.2px;font-size:10px;line-height:14px;color:#605E5C;letter-spacing:-0.5px">Off</div>
<div style="position:absolute;left:1481px;top:603px;width:164px;height:40px;background:#F3F2F1;border-radius:4px;box-shadow:0 1px 2px rgba(0,0,0,0.15)"></div>
<svg style="position:absolute;left:1490px;top:616.5px" width="10" height="14" viewBox="0 0 10 14"><path d="M2 1.2l5.6 5.8L2 12.8" fill="none" stroke="#252423" stroke-width="1.2"/></svg>
<div class="t" style="left:1505px;top:616.8px;font-size:12px;line-height:15.0px;color:#252423;font-weight:normal;-webkit-text-stroke:0.26px #252423;">Spacing</div>
<svg style="position:absolute;left:1482px;top:657px" width="14" height="14" viewBox="0 0 14 14"><path d="M3.5 3.5A5 5 0 1 1 2.5 8" fill="none" stroke="#117865" stroke-width="1.1"/><path d="M1.5 1.5v3.5h3.5" fill="none" stroke="#3B3A39" stroke-width="1.1"/></svg>
<div class="t" style="left:1501px;top:657.36px;font-size:11.9px;line-height:14.88px;color:#252423;font-weight:normal;">Reset to default</div>
<svg style="position:absolute;left:1482px;top:697.7px" width="10" height="14" viewBox="0 0 10 14"><path d="M2 1.2l5.6 5.8L2 12.8" fill="none" stroke="#252423" stroke-width="1.2"/></svg>
<div class="t" style="left:1497px;top:698.0px;font-size:12px;line-height:15.0px;color:#252423;font-weight:normal;-webkit-text-stroke:0.26px #252423;">Data labels</div>
<div style="position:absolute;left:1613px;top:696.7px;width:32px;height:16px;border-radius:8px;background:#605E5C"></div>
<div class="t" style="left:1617.5px;top:698.2px;font-size:10px;line-height:14px;color:#fff;letter-spacing:-0.4px">On</div>
<div style="position:absolute;left:1631.5px;top:700.2px;width:9px;height:9px;border-radius:5px;background:#fff"></div>
<div style="position:absolute;left:1473px;top:724px;width:180px;height:1px;background:#E1DFDD"></div>
<svg style="position:absolute;left:1482px;top:738.7px" width="10" height="14" viewBox="0 0 10 14"><path d="M2 1.2l5.6 5.8L2 12.8" fill="none" stroke="#A19F9D" stroke-width="1.2"/></svg>
<div class="t" style="left:1497px;top:739.0px;font-size:12px;line-height:15.0px;color:#A19F9D;font-weight:normal;-webkit-text-stroke:0.26px #A19F9D;">Total labels</div>
<div style="position:absolute;left:1613px;top:737.7px;width:32px;height:16px;box-sizing:border-box;border-radius:8px;background:#fff;border:1px solid #C8C6C4"></div>
<div style="position:absolute;left:1617.5px;top:741.2px;width:9px;height:9px;border-radius:5px;background:#C8C6C4"></div>
<div class="t" style="left:1628px;top:739.9000000000001px;font-size:10px;line-height:14px;color:#A19F9D;letter-spacing:-0.5px">Off</div>
<div style="position:absolute;left:1473px;top:765px;width:180px;height:1px;background:#E1DFDD"></div>
<svg style="position:absolute;left:1482px;top:779.7px" width="10" height="14" viewBox="0 0 10 14"><path d="M2 1.2l5.6 5.8L2 12.8" fill="none" stroke="#252423" stroke-width="1.2"/></svg>
<div class="t" style="left:1497px;top:780.0px;font-size:12px;line-height:15.0px;color:#252423;font-weight:normal;-webkit-text-stroke:0.26px #252423;">Plot area background</div>
<div style="position:absolute;left:1473px;top:806px;width:180px;height:1px;background:#E1DFDD"></div>
<div class="t" style="left:1662px;top:-1.5px;font-size:16px;line-height:20.0px;color:#252423;font-weight:normal;-webkit-text-stroke:0.35px #252423;">Data</div>
<div style="position:absolute;left:1658px;top:34px;width:60px;height:27px;box-sizing:border-box;background:#fff;border:1px solid #605E5C;border-radius:3px"></div>
<svg style="position:absolute;left:1665px;top:40px" width="16" height="16" viewBox="0 0 16 16"><circle cx="9.5" cy="6.5" r="4.5" fill="none" stroke="#252423" stroke-width="1.1"/><path d="M6.3 9.7L1.5 14.5" stroke="#252423" stroke-width="1.1"/></svg>
<div class="t" style="left:1687px;top:40.5px;font-size:12.8px;line-height:16.0px;color:#3B3A39;font-weight:normal;">orc</div>
<svg style="position:absolute;left:1660px;top:77px" width="14" height="10" viewBox="0 0 14 10"><path d="M1 1.5l6 6l6-6" fill="none" stroke="#605E5C" stroke-width="1.1"/></svg>
<svg style="position:absolute;left:1675px;top:75px" width="16" height="14" viewBox="0 0 16 14"><path d="M1 1h13v12H1zM1 4.5h13M1 8h13M5.5 1v12M10 1v12" fill="none" stroke="#252423" stroke-width="1"/></svg>
<div style="position:absolute;left:1695px;top:73px;width:11px;height:17px;background:#117865"></div>
<div class="t" style="left:1695px;top:73px;font-size:13px;line-height:17px;color:#fff">Or</div>
<svg style="position:absolute;left:1682px;top:82px" width="13" height="13" viewBox="0 0 13 13"><circle cx="6.5" cy="6.5" r="5.8" fill="#117865" stroke="#F3F2F1" stroke-width="0.8"/><path d="M3.8 6.6l1.8 1.8l3.5-3.6" fill="none" stroke="#fff" stroke-width="1.2"/></svg>
<div style="position:absolute;left:1692px;top:100px;width:12px;height:12px;background:#117865;border-radius:2px"></div>
<svg style="position:absolute;left:1692px;top:100px" width="12" height="12" viewBox="0 0 12 12"><path d="M2.5 6.2l2.3 2.3l4.8-5" fill="none" stroke="#fff" stroke-width="1.2"/></svg>
<div style="position:absolute;left:1692px;top:124px;width:12px;height:12px;box-sizing:border-box;border:1px solid #7A7876;border-radius:2px;background:#F3F2F1"></div>
<div style="position:absolute;left:1692px;top:148px;width:12px;height:12px;box-sizing:border-box;border:1px solid #7A7876;border-radius:2px;background:#F3F2F1"></div>
<div style="position:absolute;left:1692px;top:172px;width:12px;height:12px;box-sizing:border-box;border:1px solid #7A7876;border-radius:2px;background:#F3F2F1"></div>
<div style="position:absolute;left:1692px;top:196px;width:12px;height:12px;box-sizing:border-box;border:1px solid #7A7876;border-radius:2px;background:#F3F2F1"></div>
<div style="position:absolute;left:1692px;top:220px;width:12px;height:12px;box-sizing:border-box;border:1px solid #7A7876;border-radius:2px;background:#F3F2F1"></div>
<div style="position:absolute;left:1692px;top:244px;width:12px;height:12px;box-sizing:border-box;border:1px solid #7A7876;border-radius:2px;background:#F3F2F1"></div>
<div style="position:absolute;left:1692px;top:268px;width:12px;height:12px;box-sizing:border-box;border:1px solid #7A7876;border-radius:2px;background:#F3F2F1"></div>
<div style="position:absolute;left:1692px;top:292px;width:12px;height:12px;box-sizing:border-box;border:1px solid #7A7876;border-radius:2px;background:#F3F2F1"></div>
<div style="position:absolute;left:1692px;top:316px;width:12px;height:12px;box-sizing:border-box;border:1px solid #7A7876;border-radius:2px;background:#F3F2F1"></div>
<div style="position:absolute;left:1692px;top:340px;width:12px;height:12px;box-sizing:border-box;border:1px solid #7A7876;border-radius:2px;background:#F3F2F1"></div>
<div style="position:absolute;left:1692px;top:364px;width:12px;height:12px;box-sizing:border-box;border:1px solid #7A7876;border-radius:2px;background:#F3F2F1"></div>
<div style="position:absolute;left:1692px;top:388px;width:12px;height:12px;box-sizing:border-box;border:1px solid #7A7876;border-radius:2px;background:#F3F2F1"></div>
<div style="position:absolute;left:1692px;top:412px;width:12px;height:12px;box-sizing:border-box;border:1px solid #7A7876;border-radius:2px;background:#F3F2F1"></div>
<div style="position:absolute;left:1692px;top:436px;width:12px;height:12px;box-sizing:border-box;border:1px solid #7A7876;border-radius:2px;background:#F3F2F1"></div>
<div style="position:absolute;left:1692px;top:460px;width:12px;height:12px;box-sizing:border-box;border:1px solid #7A7876;border-radius:2px;background:#F3F2F1"></div>
<div style="position:absolute;left:1692px;top:484px;width:12px;height:12px;box-sizing:border-box;border:1px solid #7A7876;border-radius:2px;background:#F3F2F1"></div>
<div style="position:absolute;left:1692px;top:508px;width:12px;height:12px;box-sizing:border-box;border:1px solid #7A7876;border-radius:2px;background:#F3F2F1"></div>
<div style="position:absolute;left:1692px;top:532px;width:12px;height:12px;box-sizing:border-box;border:1px solid #7A7876;border-radius:2px;background:#F3F2F1"></div>
<div style="position:absolute;left:1692px;top:556px;width:12px;height:12px;box-sizing:border-box;border:1px solid #7A7876;border-radius:2px;background:#F3F2F1"></div>
<div style="position:absolute;left:1692px;top:580px;width:12px;height:12px;box-sizing:border-box;border:1px solid #7A7876;border-radius:2px;background:#F3F2F1"></div>
<div style="position:absolute;left:1406px;top:458px;width:310px;height:66px;background:#fff;border-radius:3px;box-shadow:0 0 4px rgba(0,0,0,0.2)"></div>
<svg style="position:absolute;left:1549px;top:526px" width="14" height="6" viewBox="0 0 14 6"><path d="M1 0h12L7 5z" fill="#fff"/></svg>
<div class="t" style="left:1414px;top:468.1px;font-size:12px;line-height:15.0px;color:#201F1E;font-weight:bold;">Conditional formatting</div>
<div class="t" style="left:1414px;top:484.38px;font-size:12.2px;line-height:15.25px;color:#201F1E;font-weight:normal;">Make this property change under different conditions</div>
<div class="t" style="left:1414px;top:500.18px;font-size:12.2px;line-height:15.25px;color:#201F1E;font-weight:normal;">that you define.</div>
<div style="position:absolute;left:1376px;top:448px;width:340px;height:79px;box-sizing:border-box;border:5px solid #ED1C24"></div>
</div>
</body></html>
